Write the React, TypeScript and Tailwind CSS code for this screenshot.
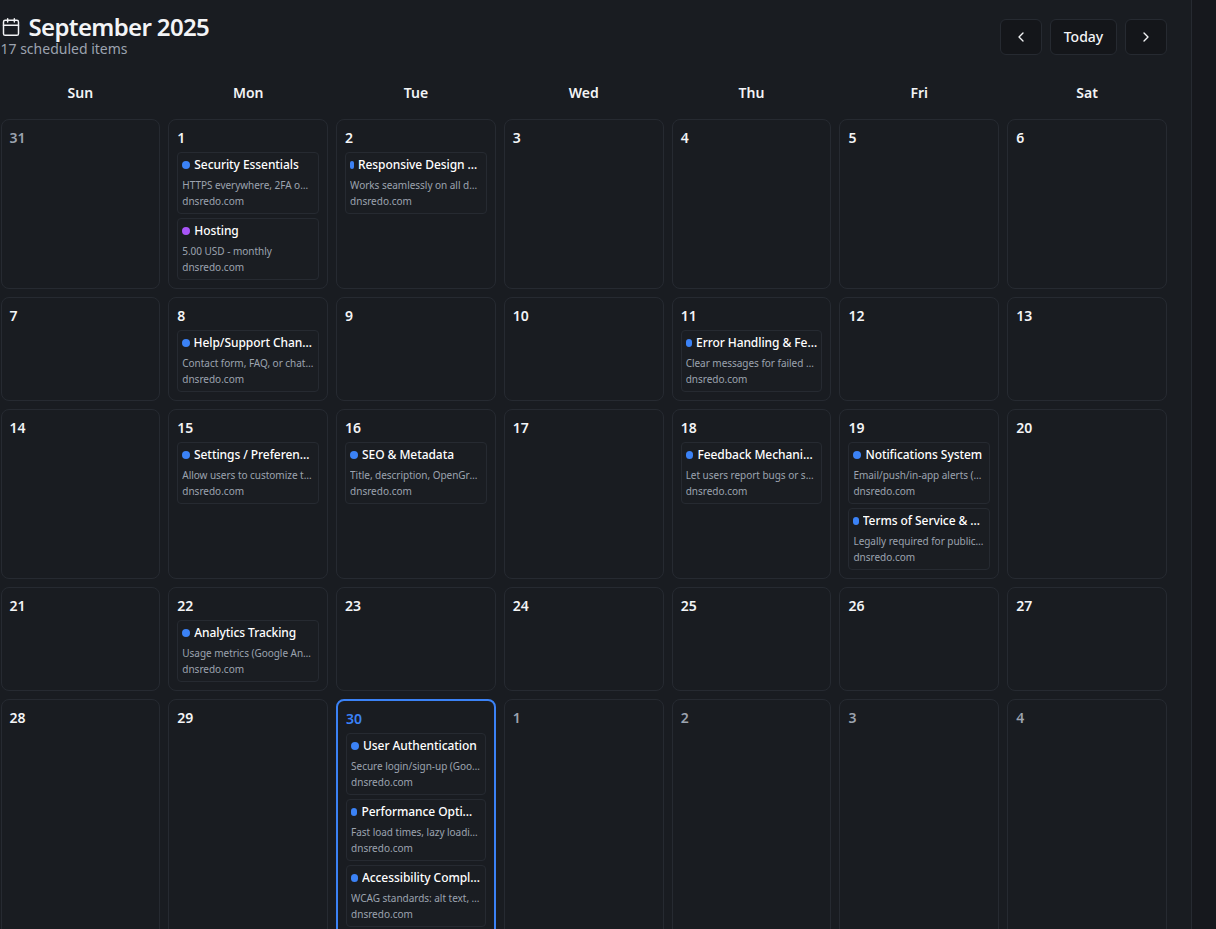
import { ChevronLeft, ChevronRight, Calendar } from "lucide-react";

type Item = { t: string; d: string; c?: string };
type Cell = { n: number; muted?: boolean; today?: boolean; items?: Item[] };

const blue = "bg-[#3b82f6]";
const purple = "bg-[#a855f7]";

const weeks: Cell[][] = [
  [
    { n: 31, muted: true },
    {
      n: 1,
      items: [
        { t: "Security Essentials", d: "HTTPS everywhere, 2FA options, encrypted data" },
        { t: "Hosting", d: "5.00 USD - monthly", c: purple },
      ],
    },
    {
      n: 2,
      items: [{ t: "Responsive Design / Mobile Friendly Layouts", d: "Works seamlessly on all devices and screens" }],
    },
    { n: 3 },
    { n: 4 },
    { n: 5 },
    { n: 6 },
  ],
  [
    { n: 7 },
    { n: 8, items: [{ t: "Help/Support Channels", d: "Contact form, FAQ, or chat support for users" }] },
    { n: 9 },
    { n: 10 },
    { n: 11, items: [{ t: "Error Handling & Feedback", d: "Clear messages for failed actions and errors" }] },
    { n: 12 },
    { n: 13 },
  ],
  [
    { n: 14 },
    { n: 15, items: [{ t: "Settings / Preferences", d: "Allow users to customize their experience" }] },
    { n: 16, items: [{ t: "SEO & Metadata", d: "Title, description, OpenGraph tags and more" }] },
    { n: 17 },
    { n: 18, items: [{ t: "Feedback Mechanism", d: "Let users report bugs or suggest features" }] },
    {
      n: 19,
      items: [
        { t: "Notifications System", d: "Email/push/in-app alerts (optional at launch)" },
        { t: "Terms of Service & Privacy Policy", d: "Legally required for public-facing apps" },
      ],
    },
    { n: 20 },
  ],
  [
    { n: 21 },
    { n: 22, items: [{ t: "Analytics Tracking", d: "Usage metrics (Google Analytics, Plausible)" }] },
    { n: 23 },
    { n: 24 },
    { n: 25 },
    { n: 26 },
    { n: 27 },
  ],
  [
    { n: 28 },
    { n: 29 },
    {
      n: 30,
      today: true,
      items: [
        { t: "User Authentication", d: "Secure login/sign-up (Google, email, etc.)" },
        { t: "Performance Optimization", d: "Fast load times, lazy loading, caching" },
        { t: "Accessibility Compliance", d: "WCAG standards: alt text, keyboard navigation" },
      ],
    },
    { n: 1, muted: true },
    { n: 2, muted: true },
    { n: 3, muted: true },
    { n: 4, muted: true },
  ],
];

const days = ["Sun", "Mon", "Tue", "Wed", "Thu", "Fri", "Sat"];

function Card({ item }: { item: Item }) {
  return (
    <div className="rounded border border-[#262a31] bg-[#1a1d22] px-1 pt-1 h-[62px] min-w-0">
      <div className="flex items-center gap-1 h-4">
        <span className={`w-2 h-2 rounded-full ${item.c ?? blue}`} />
        <span className="truncate text-xs font-medium leading-4 tracking-[-0.07px] text-white">{item.t}</span>
      </div>
      <div className="mt-[4px] truncate text-[10px] leading-4 tracking-[-0.03px] text-[#9ca3af]">{item.d}</div>
      <div className="truncate text-[10px] leading-4 text-[#9ca3af]">dnsredo.com</div>
    </div>
  );
}

export default function App() {
  return (
    <div
      className="h-[929px] w-[1216px] overflow-hidden bg-[#191c21] flex"
      style={{ fontFamily: '"Noto Sans", sans-serif' }}
    >
      <div className="w-[1191px] shrink-0 border-r border-[#262a31] box-content">
        <div className="w-[1167px] pl-[0.5px]">
          <div className="flex justify-between items-start pt-[13px] h-[76px]">
            <div>
              <div className="flex items-center gap-2 h-7">
                <Calendar className="w-5 h-5 text-[#f3f4f6]" strokeWidth={1.75} />
                <h1 className="text-2xl leading-7 font-semibold text-[#f3f4f6] tracking-[-0.65px]">September 2025</h1>
              </div>
              <p className="text-sm leading-5 -mt-[2px] text-[#9ca3af]">17 scheduled items</p>
            </div>
            <div className="flex gap-2 pt-[6px]">
              <button className="w-[42px] h-9 flex items-center justify-center rounded-md border border-[#262a31] bg-[#14161a] text-[#f3f4f6]">
                <ChevronLeft className="w-4 h-4" />
              </button>
              <button className="w-[67px] h-9 flex items-center justify-center rounded-md border border-[#262a31] bg-[#14161a] text-sm font-medium text-[#f3f4f6]">
                Today
              </button>
              <button className="w-[42px] h-9 flex items-center justify-center rounded-md border border-[#262a31] bg-[#14161a] text-[#f3f4f6]">
                <ChevronRight className="w-4 h-4" />
              </button>
            </div>
          </div>
          <div className="grid grid-cols-7 gap-2 h-[43px] items-center pb-[12px] pt-[3px]">
            {days.map((d) => (
              <div key={d} className="text-center text-sm font-semibold text-[#f3f4f6]">
                {d}
              </div>
            ))}
          </div>
          <div className="flex flex-col gap-2">
            {weeks.map((w, i) => (
              <div key={i} className="grid grid-cols-7 gap-2">
                {w.map((c, j) => (
                  <div
                    key={j}
                    className={`min-h-[104px] min-w-0 rounded-lg ${
                      c.today ? "border-2 border-[#3b82f6] p-2" : "border border-[#262a31] p-2"
                    }`}
                  >
                    <div
                      className={`text-sm leading-5 font-semibold mb-1 ${
                        c.today ? "text-[#3b82f6]" : c.muted ? "text-[#9ca3af]" : "text-[#f3f4f6]"
                      }`}
                    >
                      {c.n}
                    </div>
                    {c.items && (
                      <div className="flex flex-col gap-1">
                        {c.items.map((it) => (
                          <Card key={it.t} item={it} />
                        ))}
                      </div>
                    )}
                  </div>
                ))}
              </div>
            ))}
          </div>
        </div>
      </div>
      <div className="flex-1 bg-[#16181d]" />
    </div>
  );
}
